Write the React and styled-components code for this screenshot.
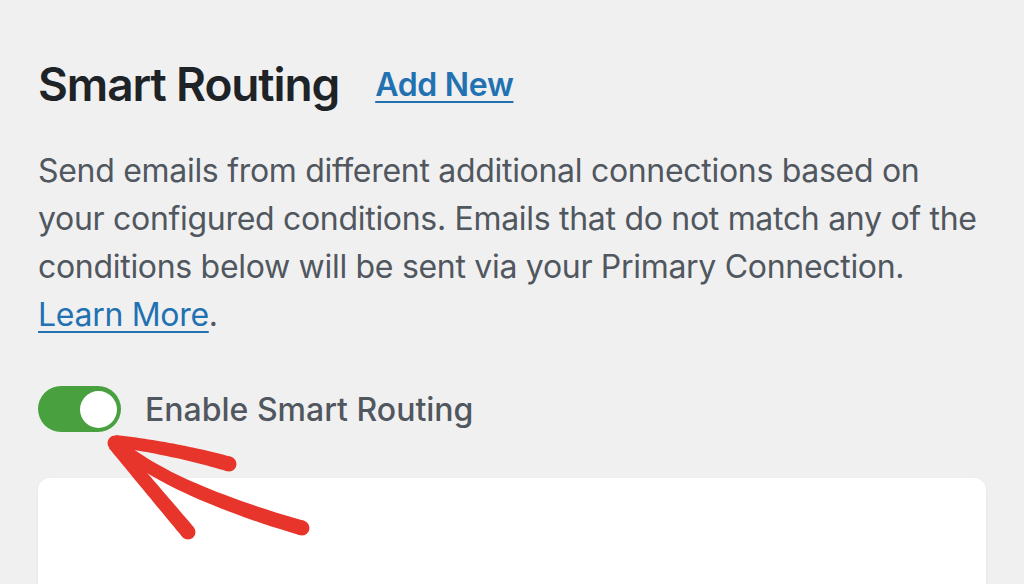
import React from "react"
import styled, { createGlobalStyle } from "styled-components"

const GlobalStyle = createGlobalStyle`
  html, body {
    margin: 0;
    padding: 0;
    background: #f0f0f1;
    overflow: hidden;
  }
  body {
    font-family: Inter, "Noto Sans", "Liberation Sans", sans-serif;
  }
`

const Page = styled.div`
  position: relative;
  width: 1024px;
  height: 584px;
  overflow: hidden;
  box-sizing: border-box;
  padding: 56px 38px 0;
`

const Header = styled.div`
  display: flex;
  align-items: center;
  gap: 36px;
`

const Title = styled.h1`
  margin: 0;
  font-size: 46px;
  line-height: 56px;
  font-weight: 600;
  color: #1d2327;
  letter-spacing: -1.1px;
`

const Link = styled.a`
  color: #2271b1;
  text-decoration: underline;
  text-underline-offset: 5px;
  text-decoration-thickness: 2px;
  font-weight: ${(p) => (p.$bold ? 600 : 400)};
  font-size: 32px;
  letter-spacing: ${(p) => (p.$bold ? "-0.3px" : "inherit")};
  cursor: pointer;
`

const Description = styled.p`
  margin: 35px 0 0;
  max-width: 948px;
  font-size: 32px;
  line-height: 48px;
  letter-spacing: -0.3px;
  color: #50575e;
`

const ToggleRow = styled.label`
  display: flex;
  align-items: center;
  gap: 24px;
  margin-top: 47px;
`

const Track = styled.span`
  display: flex;
  align-items: center;
  justify-content: ${(p) => (p.$on ? "flex-end" : "flex-start")};
  width: 83px;
  height: 46px;
  box-sizing: border-box;
  padding: 0 4px;
  border-radius: 23px;
  background: ${(p) => (p.$on ? "#48a03f" : "#c3c4c7")};
`

const Knob = styled.span`
  width: 37px;
  height: 37px;
  border-radius: 50%;
  background: #fff;
`

const ToggleLabel = styled.span`
  font-size: 32px;
  font-weight: 500;
  color: #50575e;
`

const Card = styled.div`
  margin-top: 46px;
  height: 220px;
  background: #fff;
  border-radius: 12px;
  box-shadow: 0 1px 3px rgba(0, 0, 0, 0.06);
`

const Overlay = styled.svg`
  position: absolute;
  left: 0;
  top: 0;
  pointer-events: none;
`

// tapered brush stroke along a quadratic curve
function taper(p0, c, p1, w0, w1, n = 28) {
  const left = []
  const right = []
  for (let i = 0; i <= n; i++) {
    const t = i / n
    const u = 1 - t
    const x = u * u * p0[0] + 2 * u * t * c[0] + t * t * p1[0]
    const y = u * u * p0[1] + 2 * u * t * c[1] + t * t * p1[1]
    const dx = 2 * u * (c[0] - p0[0]) + 2 * t * (p1[0] - c[0])
    const dy = 2 * u * (c[1] - p0[1]) + 2 * t * (p1[1] - c[1])
    const len = Math.hypot(dx, dy) || 1
    const nx = -dy / len
    const ny = dx / len
    const w = (w0 + (w1 - w0) * t) / 2
    left.push(`${(x + nx * w).toFixed(1)} ${(y + ny * w).toFixed(1)}`)
    right.push(`${(x - nx * w).toFixed(1)} ${(y - ny * w).toFixed(1)}`)
  }
  return `M${left.join(" L")} L${right.reverse().join(" L")} Z`
}

const strokes = [
  { p0: [115, 442], c: [165, 488], p1: [302, 528], w0: 12, w1: 15 },
  { p0: [115, 441], c: [172, 448], p1: [229, 464], w0: 12, w1: 15 },
  { p0: [114, 444], c: [150, 487], p1: [188, 532], w0: 13, w1: 15 },
]

const RED = "#e8352b"

const Arrow = () => (
  <Overlay width="1024" height="584" viewBox="0 0 1024 584">
    <g fill={RED}>
      <circle cx="115" cy="443" r="7.5" />
      {strokes.map((s, i) => (
        <g key={i}>
          <path d={taper(s.p0, s.c, s.p1, s.w0, s.w1)} />
          <circle cx={s.p1[0]} cy={s.p1[1]} r={s.w1 / 2} />
        </g>
      ))}
    </g>
  </Overlay>
)

const App = () => (
  <Page>
    <GlobalStyle />
    <Header>
      <Title>Smart Routing</Title>
      <Link $bold>Add New</Link>
    </Header>

    <Description>
      Send emails from different additional connections based on your configured
      conditions. Emails that do not match any of the conditions below will be
      sent via your Primary Connection. <Link>Learn More</Link>.
    </Description>

    <ToggleRow>
      <Track $on>
        <Knob />
      </Track>
      <ToggleLabel>Enable Smart Routing</ToggleLabel>
    </ToggleRow>

    <Card />

    <Arrow />
  </Page>
)

export default App
